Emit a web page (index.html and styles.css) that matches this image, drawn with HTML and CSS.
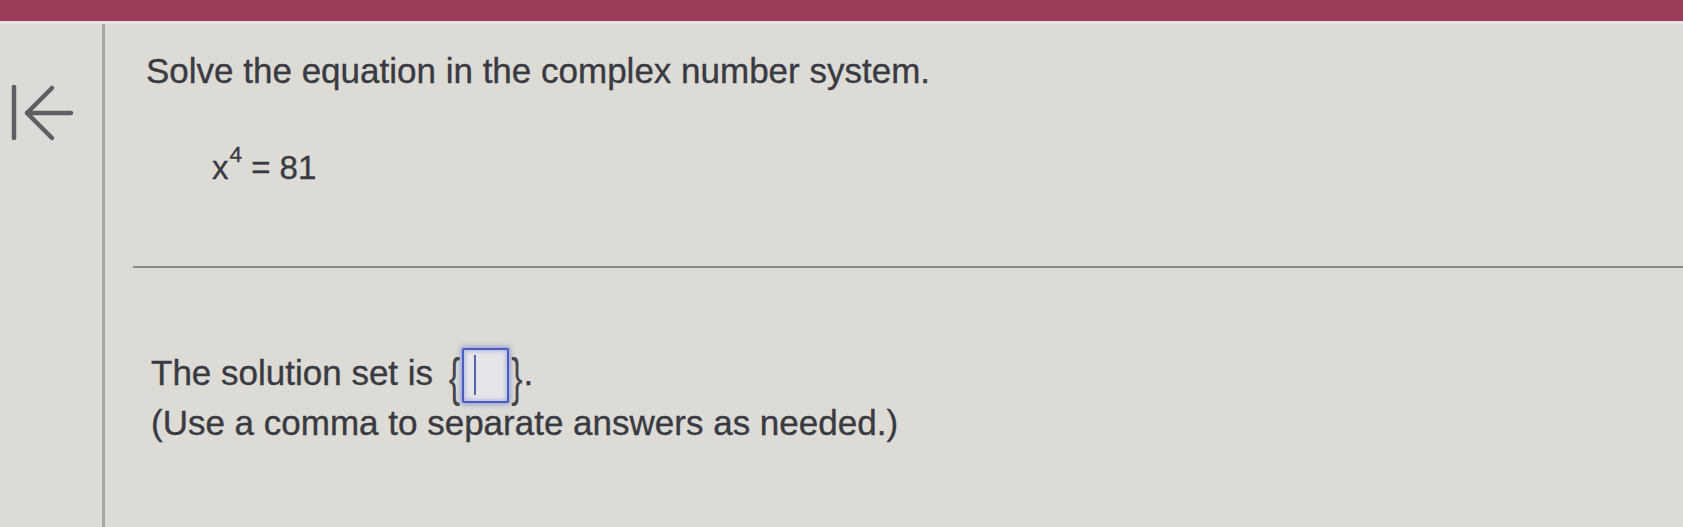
FILE: index.html
```html
<!DOCTYPE html>
<html>
<head>
<meta charset="utf-8">
<link rel="stylesheet" href="styles.css">
</head>
<body>
<div class="topbar"></div>
<div class="strip"></div>
<div class="main">
  <div class="sidebar">
    <svg class="back" width="80" height="62" viewBox="0 0 80 62">
      <line x1="14" y1="5" x2="14" y2="56" stroke="#5e5e63" stroke-width="4.5" stroke-linecap="round"/>
      <line x1="27" y1="31" x2="71" y2="31" stroke="#5e5e63" stroke-width="4.5" stroke-linecap="round"/>
      <polyline points="52,6 27,31 52,56" fill="none" stroke="#5e5e63" stroke-width="4.5" stroke-linecap="round" stroke-linejoin="round"/>
    </svg>
  </div>
  <div class="content">
    <div class="question">
      <p class="title">Solve the equation in the complex number system.</p>
      <p class="equation">x<sup>4</sup> = 81</p>
    </div>
    <div class="rule"></div>
    <div class="answer">
      <p class="line">The solution set is <span class="brace">{</span><span class="box"><span class="cursor"></span></span><span class="brace">}</span>.</p>
      <p class="note">(Use a comma to separate answers as needed.)</p>
    </div>
  </div>
</div>
</body>
</html>
```

FILE: styles.css
```css
html, body {
  margin: 0;
  padding: 0;
}
body {
  width: 1683px;
  height: 527px;
  overflow: hidden;
  background: #dcdbd6;
  font-family: "Liberation Sans", Arial, sans-serif;
  color: #3a3a41;
  -webkit-text-stroke: 0.35px #3a3a41;
  display: flex;
  flex-direction: column;
}
.topbar {
  height: 21px;
  background: #9a3c58;
  flex: none;
}
.strip {
  height: 3px;
  background: #e4e2e3;
  flex: none;
}
.main {
  flex: 1;
  display: flex;
}
.sidebar {
  width: 105px;
  flex: none;
  border-right: 3px solid #a8a8aa;
  padding-top: 58px;
  box-sizing: border-box;
}
.back {
  display: block;
}
.content {
  flex: 1;
  padding-left: 28px;
}
.question {
  padding-left: 13px;
}
.title {
  margin: 27px 0 0;
  font-size: 35px;
  line-height: 40px;
}
.equation {
  margin: 57px 0 0 66px;
  font-size: 33px;
  line-height: 40px;
}
.equation sup {
  font-size: 22.5px;
  line-height: 0;
  vertical-align: 17px;
  margin-left: 1px;
}
.rule {
  margin-top: 78px;
  height: 2px;
  background: #8a8a90;
}
.answer {
  padding-left: 18px;
  margin-top: 79px;
}
.line {
  margin: 0;
  font-size: 35px;
  line-height: 52px;
  height: 56px;
}
.brace {
  display: inline-block;
  vertical-align: middle;
  font-size: 34px;
  line-height: 34px;
  color: #45454a;
  -webkit-text-stroke: 0;
  transform: scaleY(1.55);
  margin-left: 6px;
}
.brace + .box {
  margin-left: 2px;
}
.box + .brace {
  margin-left: 2px;
  margin-right: 1px;
}
.box {
  display: inline-block;
  vertical-align: middle;
  width: 47px;
  height: 55px;
  border: 2px solid #4b5cbf;
  border-radius: 2px;
  box-shadow: 0 0 4px 2px rgba(95, 115, 215, 0.5), inset 0 0 4px 1px rgba(95, 115, 215, 0.45);
  background: #e6e6ea;
  box-sizing: border-box;
  padding: 5px 0 0 10px;
}
.cursor {
  display: block;
  width: 2px;
  height: 40px;
  background: #5565ad;
}
.note {
  margin: 0;
  font-size: 35px;
  line-height: 40px;
}
```
